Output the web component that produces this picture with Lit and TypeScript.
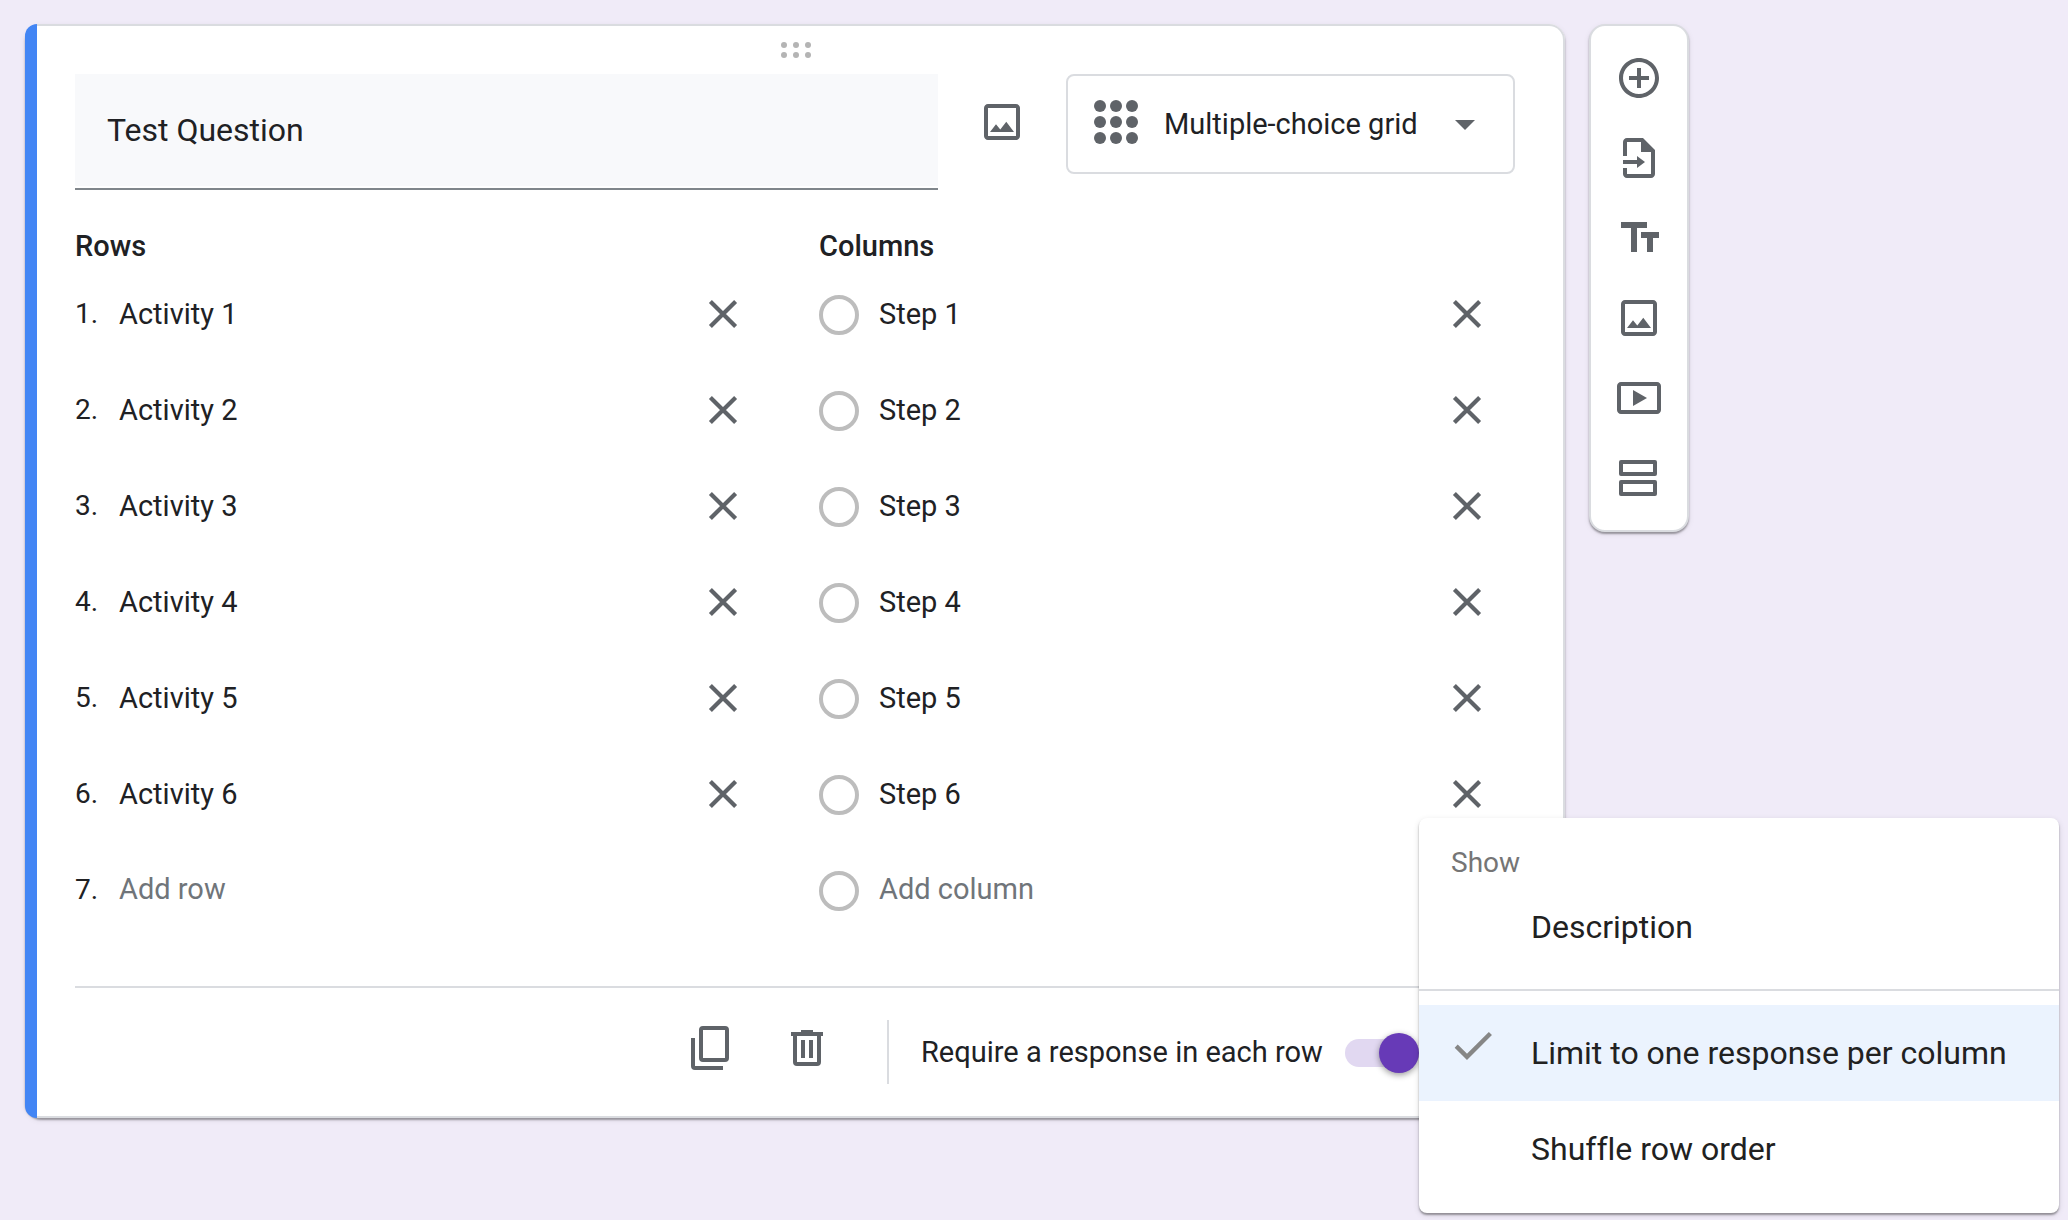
import { LitElement, html, css, svg, nothing } from "lit";
import { customElement, property, state } from "lit/decorators.js";
import { classMap } from "lit/directives/class-map.js";

const icons = {
  image: svg`<path d="M19 5v14H5V5h14m0-2H5c-1.1 0-2 .9-2 2v14c0 1.1.9 2 2 2h14c1.1 0 2-.9 2-2V5c0-1.1-.9-2-2-2z"/><path d="M14.14 11.86l-3 3.87L9 13.14 6 17h12l-3.86-5.14z"/>`,
  close: svg`<path d="M5.7 5.7L18.3 18.3M18.3 5.7L5.7 18.3" fill="none" stroke="currentColor" stroke-width="2.1"/>`,
  add: svg`<path d="M13 7h-2v4H7v2h4v4h2v-4h4v-2h-4V7zm-1-5C6.48 2 2 6.48 2 12s4.48 10 10 10 10-4.48 10-10S17.52 2 12 2zm0 18c-4.41 0-8-3.59-8-8s3.59-8 8-8 8 3.59 8 8-3.59 8-8 8z"/>`,
  import: svg`<path d="M14 2H6c-1.1 0-2 .9-2 2v7h2V4h7v5h5v11H6v-3H4v3c0 1.1.9 2 2 2h12c1.1 0 2-.9 2-2V8l-6-6z"/><path d="M4 13h7v-2l4 3-4 3v-2H4z"/>`,
  text: svg`<path d="M3 4v3h5v12h3V7h5V4H3z"/><path d="M22 9h-9v3h3v7h3v-7h3V9z"/>`,
  video: svg`<path d="M9 8v8l7-4z"/><path d="M21 4H3c-1.1 0-2 .9-2 2v12c0 1.1.9 2 2 2h18c1.1 0 2-.9 2-2V6c0-1.1-.9-2-2-2zm0 14H3V6h18v12z"/>`,
  section: svg`<path fill-rule="evenodd" d="M3 3h17a1 1 0 0 1 1 1v6a1 1 0 0 1-1 1H3a1 1 0 0 1-1-1V4a1 1 0 0 1 1-1zm1 2v4h15V5zM3 13h17a1 1 0 0 1 1 1v6a1 1 0 0 1-1 1H3a1 1 0 0 1-1-1v-6a1 1 0 0 1 1-1zm1 2v4h15v-4z"/>`,
  copy: svg`<path fill-rule="evenodd" d="M8 1h11a2 2 0 0 1 2 2v14a2 2 0 0 1-2 2H8a2 2 0 0 1-2-2V3a2 2 0 0 1 2-2zm0 2v14h11V3z"/><path d="M2 7h2v14h14v2H4a2 2 0 0 1-2-2z"/>`,
  trash: svg`<path fill-rule="evenodd" d="M15 4V3H9v1H4v2h1v13a2 2 0 0 0 2 2h10a2 2 0 0 0 2-2V6h1V4zm2 15H7V6h10z"/><path d="M9 8h2v9H9zM13 8h2v9h-2z"/>`,
  more: svg`<circle cx="12" cy="6" r="2"/><circle cx="12" cy="12" r="2"/><circle cx="12" cy="18" r="2"/>`,
  check: svg`<path d="M2.6 12.55L8 17.95 19.7 6.25" fill="none" stroke="currentColor" stroke-width="2.2"/>`,
};

type IconName = keyof typeof icons;

const icon = (name: IconName) =>
  html`<svg class="icon" viewBox="0 0 24 24" aria-hidden="true">${icons[name]}</svg>`;

const shared = css`
  * {
    box-sizing: border-box;
  }
  button,
  input,
  select {
    margin: 0;
    padding: 0;
    border: 0;
    background: none;
    font: inherit;
    color: inherit;
  }
  input:focus {
    outline: none;
  }
  button,
  select {
    cursor: pointer;
  }
  .icon {
    display: block;
    width: 48px;
    height: 48px;
    fill: currentColor;
  }
  .icon-button {
    display: grid;
    place-items: center;
    width: 96px;
    height: 96px;
    color: #5f6368;
    flex: none;
  }
`;

@customElement("question-toolbar")
class QuestionToolbar extends LitElement {
  static styles = [
    shared,
    css`
      :host {
        display: block;
        flex: none;
      }
      .toolbar {
        display: flex;
        flex-direction: column;
        width: 100px;
        padding: 12px 0;
        border: 2px solid #dadce0;
        border-radius: 16px;
        background: #fff;
        box-shadow: 0 2px 2px rgba(0, 0, 0, 0.34), 0 2px 6px rgba(0, 0, 0, 0.08);
      }
      .icon-button {
        width: 96px;
        height: 80px;
      }
    `,
  ];

  private tools: [IconName, string][] = [
    ["add", "Add question"],
    ["import", "Import questions"],
    ["text", "Add title and description"],
    ["image", "Add image"],
    ["video", "Add video"],
    ["section", "Add section"],
  ];

  render() {
    return html`<div class="toolbar" role="toolbar" aria-label="Form tools" aria-orientation="vertical">
      ${this.tools.map(
        ([name, label]) => html`<button class="icon-button" type="button" aria-label=${label}>${icon(name)}</button>`
      )}
    </div>`;
  }
}

@customElement("option-list")
class OptionList extends LitElement {
  @property() heading = "";
  @property() kind: "rows" | "columns" = "rows";
  @property() addLabel = "";
  @property({ attribute: false }) items: string[] = [];

  static styles = [
    shared,
    css`
      :host {
        display: block;
        flex: 1;
        min-width: 0;
      }
      .heading {
        margin: 0 0 4px;
        font-size: 29px;
        line-height: 32px;
        font-weight: 500;
      }
      .list {
        list-style: none;
        margin: 0;
        padding: 0;
      }
      .item {
        display: flex;
        align-items: center;
        height: 96px;
      }
      .number {
        width: 44px;
        font-size: 28px;
        flex: none;
      }
      .radio {
        appearance: none;
        width: 40px;
        height: 40px;
        margin: 2px 20px 0 0;
        border: 4px solid #bdbdbd;
        border-radius: 50%;
        flex: none;
      }
      .field {
        flex: 1;
        min-width: 0;
        height: 64px;
      }
      .field.empty {
        padding-bottom: 2px;
      }
      .field::placeholder {
        color: #70757a;
        opacity: 1;
      }
    `,
  ];

  private remove(index: number) {
    this.items = this.items.filter((_, i) => i !== index);
  }

  private renderItem(value: string, index: number) {
    const isNew = index === this.items.length;
    return html`<li class="item">
      ${this.kind === "rows"
        ? html`<span class="number">${index + 1}.</span>`
        : html`<input class="radio" type="radio" disabled aria-label=${`Option marker ${index + 1}`} />`}
      <input
        class=${classMap({ field: true, empty: isNew })}
        type="text"
        .value=${value}
        placeholder=${this.addLabel}
        aria-label=${isNew ? this.addLabel : `${this.heading} ${index + 1}`}
      />
      ${isNew
        ? nothing
        : html`<button class="icon-button" type="button" aria-label=${`Remove ${value}`} @click=${() => this.remove(index)}>
            ${icon("close")}
          </button>`}
    </li>`;
  }

  render() {
    return html`
      <h2 class="heading">${this.heading}</h2>
      <ul class="list">
        ${[...this.items, ""].map((value, index) => this.renderItem(value, index))}
      </ul>
    `;
  }
}

@customElement("options-menu")
class OptionsMenu extends LitElement {
  @state() private limit = true;

  static styles = [
    shared,
    css`
      :host {
        display: block;
      }
      .menu {
        width: 640px;
        padding: 16px 0;
        border-radius: 8px;
        background: #fff;
        color: #212121;
        box-shadow: 0 2px 2px rgba(0, 0, 0, 0.34), 0 2px 6px rgba(0, 0, 0, 0.12);
      }
      .caption {
        padding: 12px 32px 0;
        font-size: 28px;
        line-height: 33px;
        color: #757575;
      }
      .item {
        display: flex;
        align-items: center;
        width: 100%;
        height: 96px;
        padding: 0 32px;
        font-size: 32px;
        text-align: left;
      }
      .item.active {
        background: #ebf3fe;
      }
      .mark {
        width: 80px;
        height: 48px;
        color: #868686;
        flex: none;
      }
      .mark .icon {
        margin-top: -8px;
      }
      .separator {
        margin: 14px 0;
        border: 0;
        border-top: 2px solid #dadce0;
      }
    `,
  ];

  render() {
    return html`<div class="menu" role="menu" aria-label="Question options">
      <div class="caption">Show</div>
      <button class="item" type="button" role="menuitemcheckbox" aria-checked="false">
        <span class="mark"></span>Description
      </button>
      <hr class="separator" />
      <button
        class="item active"
        type="button"
        role="menuitemcheckbox"
        aria-checked=${this.limit}
        @click=${() => (this.limit = !this.limit)}
      >
        <span class="mark">${this.limit ? icon("check") : nothing}</span>Limit to one response per column
      </button>
      <button class="item" type="button" role="menuitemcheckbox" aria-checked="false">
        <span class="mark"></span>Shuffle row order
      </button>
    </div>`;
  }
}

@customElement("question-card")
class QuestionCard extends LitElement {
  @state() private menuOpen = true;

  static styles = [
    shared,
    css`
      :host {
        display: block;
        flex: 1;
        min-width: 0;
        max-width: 1540px;
      }
      .card {
        display: flex;
        border-radius: 16px;
        background: #fff;
        box-shadow: 0 2px 2px rgba(0, 0, 0, 0.34), 0 2px 6px rgba(0, 0, 0, 0.08);
      }
      .accent {
        width: 12px;
        border-radius: 16px 0 0 16px;
        background: #4285f4;
        flex: none;
      }
      .body {
        flex: 1;
        min-width: 0;
        padding: 0 48px 0 38px;
        border: 2px solid #dadce0;
        border-left: 0;
        border-radius: 0 16px 16px 0;
      }
      .handle {
        display: grid;
        place-items: center;
        width: 100%;
        height: 48px;
        padding-left: 2px;
        cursor: move;
      }
      .dots {
        display: block;
        width: 30px;
        height: 16px;
        fill: #b4b4b4;
      }
      .question {
        display: flex;
        align-items: flex-start;
        gap: 16px;
      }
      .title {
        flex: 1;
        min-width: 0;
        padding-bottom: 2px;
        border-bottom: 2px solid #80868b;
      }
      .title-input {
        display: block;
        width: 100%;
        height: 112px;
        padding: 0 32px;
        background: #f8f9fb;
        font-size: 32px;
      }
      .type {
        display: grid;
        grid-template-columns: 44px 1fr 20px;
        align-items: center;
        width: 449px;
        height: 100px;
        padding: 0 38px 4px 26px;
        border: 2px solid #dadce0;
        border-radius: 8px;
        flex: none;
      }
      .type-icon,
      .type-caret {
        grid-row: 1;
        display: block;
        fill: #5f6368;
        pointer-events: none;
      }
      .type-icon {
        grid-column: 1;
        width: 44px;
        height: 44px;
      }
      .type-caret {
        grid-column: 3;
        width: 20px;
        height: 10px;
        margin-top: 6px;
      }
      .type-select {
        grid-row: 1;
        grid-column: 1 / -1;
        appearance: none;
        height: 90px;
        padding: 3px 0 0 70px;
      }
      .lists {
        display: flex;
        gap: 48px;
        padding: 40px 0 48px;
      }
      .footer {
        display: flex;
        justify-content: flex-end;
        height: 130px;
        padding: 12px 0 20px;
        border-top: 2px solid #dadce0;
      }
      .rule {
        width: 2px;
        height: 64px;
        margin: 20px 32px 0;
        background: #dadce0;
      }
      .require {
        display: flex;
        align-items: center;
        justify-content: space-between;
        width: 496px;
        height: 96px;
        margin: 4px 2px 0 0;
      }
      .switch {
        appearance: none;
        display: flex;
        align-items: center;
        justify-content: flex-end;
        width: 72px;
        height: 28px;
        margin-top: 2px;
        border-radius: 14px;
        background: #e1d8f1;
        cursor: pointer;
      }
      .switch::before {
        content: "";
        width: 40px;
        height: 40px;
        margin-right: -2px;
        border-radius: 50%;
        background: #673ab7;
        box-shadow: 0 2px 6px rgba(0, 0, 0, 0.4);
        flex: none;
      }
      .switch:not(:checked) {
        justify-content: flex-start;
        background: #b9b9b9;
      }
      .switch:not(:checked)::before {
        background: #fafafa;
      }
      .anchor {
        position: relative;
      }
      .popup {
        position: absolute;
        left: 0;
        bottom: -117px;
        z-index: 1;
      }
    `,
  ];

  render() {
    const dot = (x: number, y: number, r: number) => svg`<circle cx=${x} cy=${y} r=${r} />`;
    return html`<section class="card" aria-label="Question">
      <div class="accent"></div>
      <div class="body">
        <button class="handle" type="button" aria-label="Move question">
          <svg class="dots" viewBox="0 0 30 16" aria-hidden="true">
            ${[3, 13].map((y) => [3, 15, 27].map((x) => dot(x, y, 3)))}
          </svg>
        </button>
        <div class="question">
          <div class="title">
            <input class="title-input" type="text" aria-label="Question title" .value=${"Test Question"} />
          </div>
          <button class="icon-button" type="button" aria-label="Add image">${icon("image")}</button>
          <div class="type">
            <svg class="type-icon" viewBox="0 0 44 44" aria-hidden="true">
              ${[6, 22, 38].map((y) => [6, 22, 38].map((x) => dot(x, y, 6)))}
            </svg>
            <select class="type-select" aria-label="Question type">
              <option>Multiple-choice grid</option>
            </select>
            <svg class="type-caret" viewBox="0 0 20 10" aria-hidden="true"><path d="M0 0h20L10 10z" /></svg>
          </div>
        </div>
        <div class="lists">
          <option-list
            heading="Rows"
            kind="rows"
            .addLabel=${"Add row"}
            .items=${[1, 2, 3, 4, 5, 6].map((n) => `Activity ${n}`)}
          ></option-list>
          <option-list
            heading="Columns"
            kind="columns"
            .addLabel=${"Add column"}
            .items=${[1, 2, 3, 4, 5, 6].map((n) => `Step ${n}`)}
          ></option-list>
        </div>
        <div class="footer">
          <button class="icon-button" type="button" aria-label="Duplicate">${icon("copy")}</button>
          <button class="icon-button" type="button" aria-label="Delete">${icon("trash")}</button>
          <div class="rule"></div>
          <label class="require">
            Require a response in each row
            <input class="switch" type="checkbox" role="switch" checked />
          </label>
          <div class="anchor">
            <button
              class="icon-button"
              type="button"
              aria-label="More options"
              aria-haspopup="menu"
              aria-expanded=${this.menuOpen}
              @click=${() => (this.menuOpen = !this.menuOpen)}
            >
              ${icon("more")}
            </button>
            ${this.menuOpen ? html`<options-menu class="popup"></options-menu>` : nothing}
          </div>
        </div>
      </div>
    </section>`;
  }
}

@customElement("app-root")
class AppRoot extends LitElement {
  static styles = [
    shared,
    css`
      :host {
        display: block;
        min-height: 100vh;
        background: #f0ebf8;
        color: #202124;
        font-family: Roboto, "Liberation Sans", sans-serif;
        font-size: 29px;
        font-variant-ligatures: none;
        line-height: 32px;
      }
      .page {
        display: flex;
        align-items: flex-start;
        gap: 24px;
        padding: 24px 25px;
      }
    `,
  ];

  render() {
    return html`<main class="page">
      <question-card></question-card>
      <question-toolbar></question-toolbar>
    </main>`;
  }
}
